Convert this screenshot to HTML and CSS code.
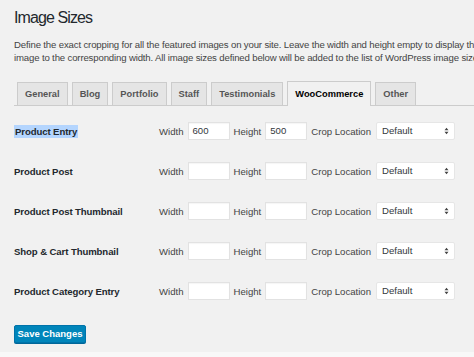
FILE: index.html
```html
<!DOCTYPE html>
<html>
<head>
<meta charset="utf-8">
<link rel="stylesheet" href="styles.css">
</head>
<body>
<div class="page">
  <h1 class="title">Image Sizes</h1>
  <p class="desc">Define the exact cropping for all the featured images on your site. Leave the width and height empty to display the<br>image to the corresponding width. All image sizes defined below will be added to the list of WordPress image sizes.</p>
  <div class="tabs">
    <span class="tab">General</span>
    <span class="tab">Blog</span>
    <span class="tab">Portfolio</span>
    <span class="tab">Staff</span>
    <span class="tab">Testimonials</span>
    <span class="tab active">WooCommerce</span>
    <span class="tab">Other</span>
  </div>
  <div class="rows">
    <div class="row">
      <div class="label"><span class="selected">Product Entry</span></div>
      <span class="fl">Width</span><span class="input">600</span>
      <span class="fl">Height</span><span class="input">500</span>
      <span class="fl">Crop Location</span><span class="select">Default<span class="arr"><svg width="5" height="8" viewBox="0 0 5 8"><path d="M0.5 3.2 L2.5 0.8 L4.5 3.2 Z M0.5 4.8 L2.5 7.2 L4.5 4.8 Z" fill="#444"/></svg></span></span>
    </div>
    <div class="row">
      <div class="label">Product Post</div>
      <span class="fl">Width</span><span class="input"></span>
      <span class="fl">Height</span><span class="input"></span>
      <span class="fl">Crop Location</span><span class="select">Default<span class="arr"><svg width="5" height="8" viewBox="0 0 5 8"><path d="M0.5 3.2 L2.5 0.8 L4.5 3.2 Z M0.5 4.8 L2.5 7.2 L4.5 4.8 Z" fill="#444"/></svg></span></span>
    </div>
    <div class="row">
      <div class="label">Product Post Thumbnail</div>
      <span class="fl">Width</span><span class="input"></span>
      <span class="fl">Height</span><span class="input"></span>
      <span class="fl">Crop Location</span><span class="select">Default<span class="arr"><svg width="5" height="8" viewBox="0 0 5 8"><path d="M0.5 3.2 L2.5 0.8 L4.5 3.2 Z M0.5 4.8 L2.5 7.2 L4.5 4.8 Z" fill="#444"/></svg></span></span>
    </div>
    <div class="row">
      <div class="label">Shop &amp; Cart Thumbnail</div>
      <span class="fl">Width</span><span class="input"></span>
      <span class="fl">Height</span><span class="input"></span>
      <span class="fl">Crop Location</span><span class="select">Default<span class="arr"><svg width="5" height="8" viewBox="0 0 5 8"><path d="M0.5 3.2 L2.5 0.8 L4.5 3.2 Z M0.5 4.8 L2.5 7.2 L4.5 4.8 Z" fill="#444"/></svg></span></span>
    </div>
    <div class="row">
      <div class="label">Product Category Entry</div>
      <span class="fl">Width</span><span class="input"></span>
      <span class="fl">Height</span><span class="input"></span>
      <span class="fl">Crop Location</span><span class="select">Default<span class="arr"><svg width="5" height="8" viewBox="0 0 5 8"><path d="M0.5 3.2 L2.5 0.8 L4.5 3.2 Z M0.5 4.8 L2.5 7.2 L4.5 4.8 Z" fill="#444"/></svg></span></span>
    </div>
  </div>
  <div class="actions"><span class="btn">Save Changes</span></div>
</div>
<div class="footer"></div>
</body>
</html>
```
FILE: styles.css
```css
html, body {
  margin: 0;
  padding: 0;
  background: #f1f1f1;
  overflow: hidden;
}
body {
  font-family: "Liberation Sans", Arial, sans-serif;
  color: #444;
  width: 474px;
  height: 357px;
  display: flex;
  flex-direction: column;
}
.page {
  padding: 9px 0 0 14px;
  flex: 1;
  overflow: hidden;
}
.title {
  margin: 0;
  font-size: 16px;
  font-weight: normal;
  color: #23282d;
  line-height: 18px;
  letter-spacing: -0.9px;
}
.desc {
  margin: 11px 0 0 0;
  font-size: 9.6px;
  letter-spacing: -0.15px;
  line-height: 13px;
  color: #444;
  white-space: nowrap;
}
.tabs {
  margin-top: 17px;
  display: flex;
  gap: 4px;
  padding-left: 3px;
  border-bottom: 1px solid #ccc;
  height: 24px;
  align-items: flex-end;
}
.tab {
  box-sizing: border-box;
  height: 23px;
  padding: 0 7px;
  background: #e5e5e5;
  border: 1px solid #ccc;
  border-bottom: none;
  font-size: 9.3px;
  font-weight: bold;
  color: #555;
  line-height: 22px;
}
.tab.active {
  background: #f1f1f1;
  color: #000;
  height: 25px;
  margin-bottom: -1px;
  line-height: 24px;
}
.rows {
  margin-top: 16px;
  display: flex;
  flex-direction: column;
  gap: 22px;
}
.row {
  display: flex;
  align-items: center;
  height: 18px;
  font-size: 9.6px;
}
.label {
  width: 145px;
  font-weight: bold;
  color: #23282d;
  letter-spacing: -0.1px;
}
.selected {
  background: #b4d5fe;
  padding: 1px 1px;
}
.fl {
  color: #444;
  margin-right: 4px;
}
.input {
  box-sizing: border-box;
  width: 42px;
  height: 18px;
  background: #fff;
  border: 1px solid #e2e2e2;
  box-shadow: inset 0 1px 1px rgba(0,0,0,0.04);
  padding: 0 4px;
  line-height: 16px;
  color: #32373c;
  margin-right: 4px;
}
.input + .fl {
  margin-left: 0;
}
.select {
  box-sizing: border-box;
  width: 79px;
  height: 18px;
  margin-left: 1px;
  background: #fff;
  border: 1px solid #e6e6e6;
  border-radius: 2px;
  padding: 0 5px;
  line-height: 16px;
  color: #32373c;
  display: flex;
  justify-content: space-between;
  align-items: center;
}
.arr {
  display: flex;
}
.actions {
  margin-top: 23px;
}
.btn {
  display: inline-block;
  box-sizing: border-box;
  height: 18px;
  width: 72px;
  background: #0085ba;
  border: 1px solid #0073aa;
  border-radius: 2px;
  color: #fff;
  font-size: 9.5px;
  font-weight: bold;
  line-height: 16px;
  text-align: center;
  box-shadow: 0 1px 0 #006799;
}
.footer {
  height: 5px;
  background: #f8f8f8;
}
```
